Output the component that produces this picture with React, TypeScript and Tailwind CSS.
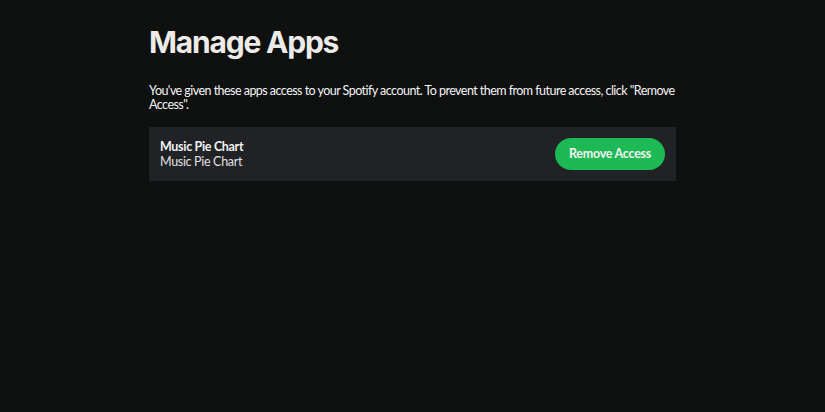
export default function App() {
  return (
    <div className="min-h-[412px] w-full bg-[#0f1010] font-['Lato',sans-serif] text-white">
      <div className="mx-auto w-[527px] pt-[22px]">
        <h1 className="font-['Inter',sans-serif] text-[30px] font-bold leading-[40px] tracking-[-0.04em] text-[#ecebe7]">
          Manage Apps
        </h1>

        <p className="mt-[22px] text-[12.5px] leading-[14px] tracking-[-0.043em] text-[#f4f4f4]">
          You've given these apps access to your Spotify account. To prevent them from future access,
          click "Remove Access".
        </p>

        <div className="mt-[15px] flex items-center justify-between bg-[#212225] px-[11px] py-[11px]">
          <div className="flex flex-col tracking-[-0.02em]">
            <span className="text-[12.5px] font-bold leading-[15px] text-[#f2f2f2]">Music Pie Chart</span>
            <span className="text-[12.5px] leading-[15px] text-[#e0e0e0]">Music Pie Chart</span>
          </div>
          <button
            type="button"
            className="h-[32px] w-[110px] rounded-full bg-[#1db954] text-[12.5px] font-bold tracking-[-0.02em] text-[#f2f2f2]"
          >
            Remove Access
          </button>
        </div>
      </div>
    </div>
  );
}
